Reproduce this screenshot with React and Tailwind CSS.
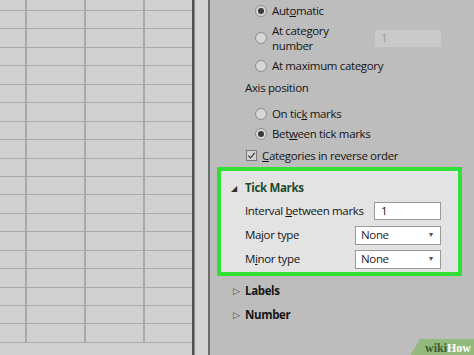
import React from 'react';

const rows = Array.from({ length: 19 });

const Radio = ({ checked }) => (
  <span className="flex h-[12px] w-[12px] shrink-0 items-center justify-center rounded-full border border-[#8c8c8c] bg-[#d6d6d6]">
    {checked && <span className="h-[6px] w-[6px] rounded-full bg-[#3a3a3a]" />}
  </span>
);

const Select = () => (
  <div className="flex h-[19px] w-[86px] shrink-0 items-center justify-between border border-[#9a9a9a] bg-white pl-[5px] pr-[6px] text-[#222]">
    <span>None</span>
    <span className="text-[7px] text-[#555]">▼</span>
  </div>
);

const App = () => {
  return (
    <div
      className="flex h-[355px] w-[474px] overflow-hidden whitespace-nowrap bg-[#bdbdbd] text-[11.5px] tracking-[-0.35px] text-[#151515]"
      style={{ fontFamily: '"Open Sans", "Noto Sans", sans-serif' }}
    >
      {/* sheet */}
      <div className="w-[192px] shrink-0 bg-[#d0d0d0]">
        {rows.map((_, i) => (
          <div
            key={i}
            className={`flex border-b border-[#a9a9a9] ${i === 0 ? 'h-[11px]' : 'h-[18.45px]'}`}
          >
            <div className="w-[27px] border-r-2 border-[#a9a9a9]" />
            <div className="w-[59px] border-r-2 border-[#a9a9a9]" />
            <div className="w-[59px] border-r-2 border-[#a9a9a9]" />
            <div className="flex-1" />
          </div>
        ))}
      </div>
      <div className="w-[2px] shrink-0 bg-[#555]" />
      <div className="w-[1px] shrink-0 bg-[#888]" />
      <div className="w-[13px] shrink-0 bg-[#d4d4d4]" />
      <div className="w-[2px] shrink-0 bg-[#6a6a6a]" />

      {/* format panel */}
      <div className="flex-1 pt-[1px]">
        <div className="flex h-[20px] items-center gap-[5px] pl-[45px]">
          <Radio checked />
          <span>Aut<u>o</u>matic</span>
        </div>
        <div className="flex h-[34px] items-center">
          <div className="flex items-center gap-[5px] pl-[45px]">
            <Radio />
            <span className="leading-[15px]">At cate<u>g</u>ory<br />number</span>
          </div>
          <div className="ml-auto mr-[33px] flex h-[17px] w-[66px] items-center bg-[#c9c9c9] pl-[6px] text-[#9a9a9a]">1</div>
        </div>
        <div className="flex h-[22px] items-center gap-[5px] pl-[45px]">
          <Radio />
          <span>At maximum category</span>
        </div>
        <div className="flex h-[22px] items-center pl-[35px]">Axis position</div>
        <div className="h-[5px]" />
        <div className="flex h-[20px] items-center gap-[5px] pl-[45px]">
          <Radio />
          <span>On tic<u>k</u> marks</span>
        </div>
        <div className="flex h-[20px] items-center gap-[5px] pl-[45px]">
          <Radio checked />
          <span>Bet<u>w</u>een tick marks</span>
        </div>
        <div className="flex h-[23px] items-center gap-[5px] pl-[36px]">
          <span className="flex h-[11px] w-[11px] items-center justify-center border border-[#7a7a7a] bg-[#d2d2d2]">
            <svg width="9" height="9" viewBox="0 0 10 10">
              <path d="M1.5 5.2 L4 7.6 L8.6 2.2" fill="none" stroke="#333" strokeWidth="1.3" />
            </svg>
          </span>
          <span><u>C</u>ategories in reverse order</span>
        </div>

        {/* highlighted section */}
        <div className="ml-[7px] mr-[12px] h-[109px] border-[4px] border-[#31df35] bg-[#e3e3e3]">
          <div className="flex h-[28px] items-center pt-[6px]">
            <span className="ml-[10px] w-[14px] text-[8px] text-[#333]">◢</span>
            <span className="font-bold text-[#1d4a2c]">Tick Marks</span>
          </div>
          <div className="flex h-[24px] items-center justify-between pl-[24px] pr-[17px]">
            <span>Interval <u>b</u>etween marks</span>
            <div className="flex h-[18px] w-[67px] items-center border border-[#9a9a9a] bg-white pl-[6px]">1</div>
          </div>
          <div className="flex h-[24px] items-center justify-between pl-[24px] pr-[17px]">
            <span>Major type</span>
            <Select />
          </div>
          <div className="flex h-[24px] items-center justify-between pl-[24px] pr-[17px]">
            <span>M<u>i</u>nor type</span>
            <Select />
          </div>
        </div>

        <div className="mt-[3px] flex h-[24px] items-center pl-[23px] font-bold">
          <span className="w-[12px] text-[9px] font-normal text-[#444]">▷</span>
          <span>Labels</span>
        </div>
        <div className="flex h-[23px] items-center pl-[23px] font-bold">
          <span className="w-[12px] text-[9px] font-normal text-[#444]">▷</span>
          <span>Number</span>
        </div>

        <div className="mt-[13px] flex justify-end">
          <div
            className="flex h-[17px] w-[64px] items-center justify-end bg-[#94b97c] pr-[3px] text-[12px] font-bold tracking-normal [clip-path:polygon(10px_0,100%_0,100%_100%,0_100%)]"
            style={{ fontFamily: '"Liberation Serif", serif' }}
          >
            <span className="text-[#3d5a2c]">wiki</span>
            <span className="text-white">How</span>
          </div>
        </div>
      </div>
    </div>
  );
};

export default App;
